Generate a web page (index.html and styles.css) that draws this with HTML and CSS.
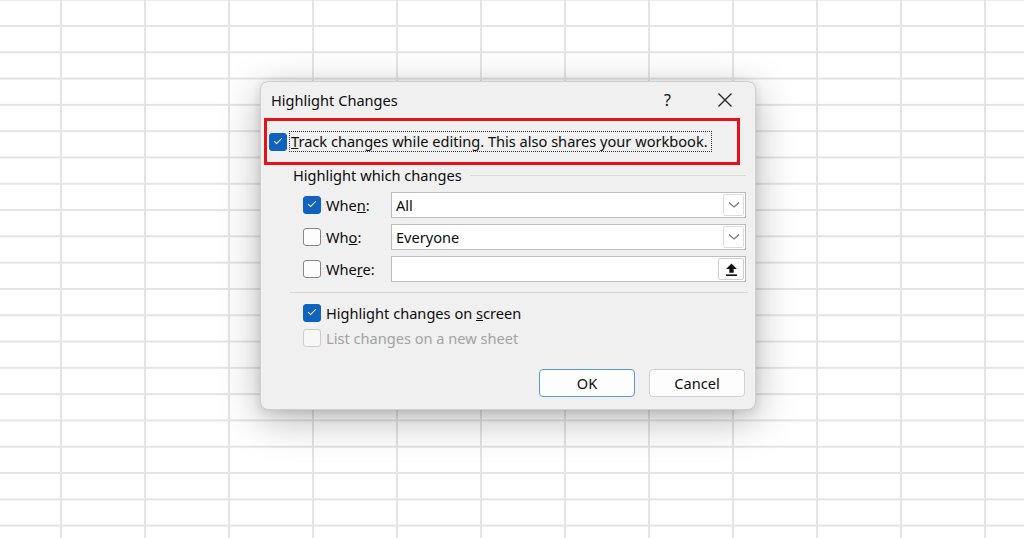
FILE: index.html
```html
<!DOCTYPE html>
<html>
<head>
    <title>Highlight Changes</title>
    <link rel="stylesheet" href="styles.css">
</head>
<body>
    <div class="sheet">
        <div class="dialog">
            <div class="titlebar">
                <span class="title">Highlight Changes</span>
                <span class="help">?</span>
                <span class="close">
                    <svg width="16" height="16" viewBox="0 0 16 16"><path d="M1.5 1.5 L14.5 14.5 M14.5 1.5 L1.5 14.5" stroke="#222" stroke-width="1.3" fill="none"/></svg>
                </span>
            </div>

            <div class="track-box">
                <span class="check checked"></span>
                <span class="focus-label"><u>T</u>rack changes while editing. This also shares your workbook.</span>
            </div>

            <div class="group-head">
                <span>Highlight which changes</span>
                <span class="group-line"></span>
            </div>

            <div class="options">
                <div class="opt-row">
                    <span class="check checked"></span>
                    <span class="opt-label">Whe<u>n</u>:</span>
                    <div class="combo">
                        <span class="combo-text">All</span>
                        <span class="drop-btn">
                            <svg width="12" height="8" viewBox="0 0 12 8"><path d="M1 1.5 L6 6 L11 1.5" stroke="#777" stroke-width="1.1" fill="none"/></svg>
                        </span>
                    </div>
                </div>
                <div class="opt-row">
                    <span class="check"></span>
                    <span class="opt-label">Wh<u>o</u>:</span>
                    <div class="combo">
                        <span class="combo-text">Everyone</span>
                        <span class="drop-btn">
                            <svg width="12" height="8" viewBox="0 0 12 8"><path d="M1 1.5 L6 6 L11 1.5" stroke="#777" stroke-width="1.1" fill="none"/></svg>
                        </span>
                    </div>
                </div>
                <div class="opt-row">
                    <span class="check"></span>
                    <span class="opt-label">Whe<u>r</u>e:</span>
                    <div class="combo">
                        <span class="combo-text"></span>
                        <span class="pick-btn">
                            <svg width="13" height="13" viewBox="0 0 12 12"><path d="M6 0.5 L11 5.5 L8 5.5 L8 9 L4 9 L4 5.5 L1 5.5 Z" fill="#111"/><rect x="1" y="10.5" width="10" height="1.5" fill="#111"/></svg>
                        </span>
                    </div>
                </div>
            </div>

            <div class="separator"></div>

            <div class="screen-opts">
                <div class="line-opt">
                    <span class="check checked"></span>
                    <span>Highlight changes on <u>s</u>creen</span>
                </div>
                <div class="line-opt disabled">
                    <span class="check"></span>
                    <span>List changes on a new sheet</span>
                </div>
            </div>

            <div class="buttons">
                <button class="btn default">OK</button>
                <button class="btn">Cancel</button>
            </div>
        </div>
    </div>
</body>
</html>
```

FILE: styles.css
```css
html, body {
    margin: 0;
    padding: 0;
}
body {
    font-family: "Noto Sans", "Open Sans", sans-serif;
    font-size: 14.6px;
    color: #0d0d0d;
    overflow: hidden;
}
.sheet {
    width: 1024px;
    height: 538px;
    box-sizing: border-box;
    padding: 81px 0 0 260px;
    background-color: #fff;
    background-image:
        linear-gradient(to right, #e4e4e4 2px, transparent 2px),
        linear-gradient(to bottom, #e4e4e4 2px, transparent 2px);
    background-size: 84px 26.3px;
    background-position: 60px 0, 0 25px;
}
.dialog {
    width: 496px;
    height: 329px;
    box-sizing: border-box;
    background: #f0f0f0;
    border: 1px solid #cfcfcf;
    border-radius: 8px;
    box-shadow: 0 10px 40px rgba(0,0,0,0.28), 0 2px 8px rgba(0,0,0,0.12);
    display: flex;
    flex-direction: column;
}
.titlebar {
    height: 36px;
    display: flex;
    align-items: center;
    padding-left: 10px;
}
.title {
    flex: 1;
}
.help {
    font-size: 16px;
    width: 14px;
    margin-right: 39px;
}
.close {
    display: flex;
    margin-right: 22px;
}
.track-box {
    width: 476px;
    height: 47px;
    box-sizing: border-box;
    margin-left: 3px;
    border: 3px solid #e5121a;
    display: flex;
    align-items: center;
    padding-left: 2px;
    gap: 3px;
}
.focus-label {
    outline: 1px dotted #333;
    padding: 0 3px 0 1px;
    line-height: 19px;
    white-space: nowrap;
}
.check {
    width: 16px;
    height: 16px;
    flex: none;
    border: 1px solid #868686;
    border-radius: 3px;
    background: #fdfdfd;
    position: relative;
}
.check.checked {
    background: #0f62be;
    border-color: #0f62be;
}
.check.checked::after {
    content: "";
    position: absolute;
    left: 4px;
    top: 4px;
    width: 7px;
    height: 3px;
    border-left: 1.3px solid #fff;
    border-bottom: 1.3px solid #fff;
    transform: rotate(-45deg);
}
.group-head {
    display: flex;
    align-items: center;
    margin: 0 9px 0 32px;
    height: 20px;
}
.group-line {
    flex: 1;
    height: 1px;
    background: #d8d8d8;
    margin-left: 8px;
}
.options {
    display: flex;
    flex-direction: column;
    gap: 6px;
    margin: 7px 9px 0 42px;
}
.opt-row {
    display: flex;
    align-items: center;
    height: 26px;
}
.opt-row .check {
    margin-right: 5px;
}
.opt-label {
    width: 65px;
}
.combo {
    flex: 1;
    height: 26px;
    box-sizing: border-box;
    border: 1px solid #bdbdbd;
    background: #fff;
    display: flex;
    align-items: center;
    padding: 1px;
}
.combo-text {
    flex: 1;
    padding-left: 3px;
}
.drop-btn, .pick-btn {
    width: 21px;
    height: 22px;
    box-sizing: border-box;
    border: 1px solid #dedede;
    border-radius: 2px;
    background: #fff;
    display: flex;
    align-items: center;
    justify-content: center;
}
.pick-btn {
    width: 26px;
    border-color: #cfcfcf;
}
.separator {
    height: 1px;
    background: #d8d8d8;
    margin: 10px 7px 0 29px;
}
.screen-opts {
    margin: 7px 0 0 42px;
}
.line-opt {
    display: flex;
    align-items: center;
    gap: 5px;
    height: 25px;
}
.line-opt.disabled {
    color: #a3a3a3;
}
.line-opt.disabled .check {
    border-color: #cdcdcd;
    background: #f7f7f7;
}
.buttons {
    display: flex;
    justify-content: flex-end;
    gap: 14px;
    margin: 19px 10px 0 0;
}
.btn {
    width: 96px;
    height: 28px;
    font-family: inherit;
    font-size: 14.6px;
    color: #0d0d0d;
    background: #fdfdfd;
    border: 1px solid #d0d0d0;
    border-radius: 4px;
    padding: 0;
}
.btn.default {
    border: 1.5px solid #5b9bd5;
}
```
